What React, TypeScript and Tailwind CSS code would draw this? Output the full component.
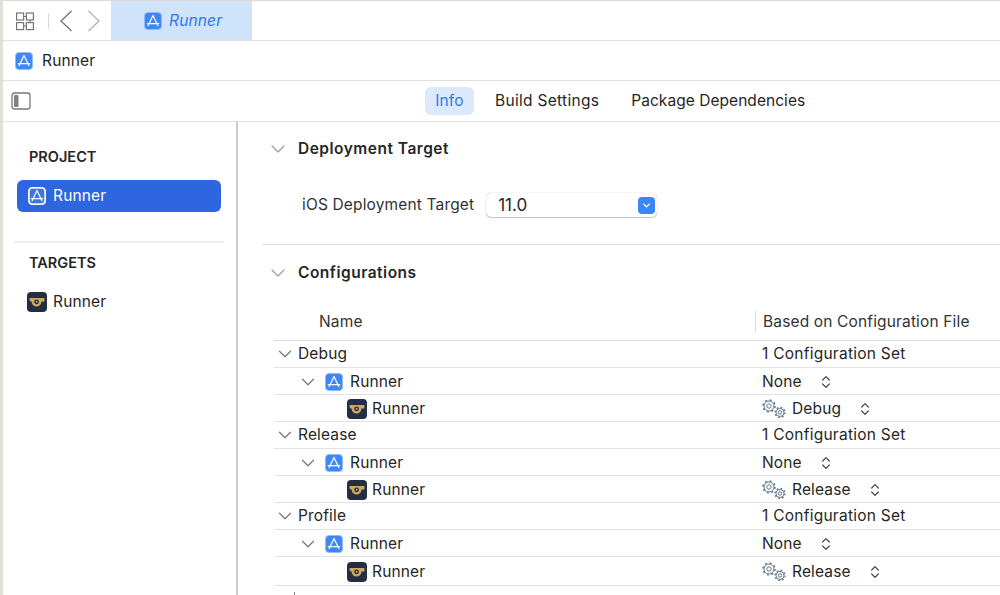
import { ChevronDown, ChevronsUpDown } from 'lucide-react';

const font = { fontFamily: 'Inter, "Liberation Sans", sans-serif' };

// blue project icon
function AppIcon({ size = 18, selected = false }: { size?: number; selected?: boolean }) {
  return (
    <svg width={size} height={size} viewBox="0 0 18 18" className="shrink-0">
      <rect x="0.5" y="0.5" width="17" height="17" rx="3.5" fill={selected ? '#e8effc' : '#3f87f5'} stroke={selected ? '#fff' : '#8fbcfa'} />
      <rect x="1.8" y="1.8" width="14.4" height="14.4" rx="2.4" fill={selected ? '#3f74e6' : '#3f87f5'} />
      <path d="M9 3.6 L13.8 13.6 M9 3.6 L4.2 13.6 M3.2 11.6 H14.8" stroke="#fff" strokeWidth="1.2" strokeLinecap="round" fill="none" />
    </svg>
  );
}

// dark target icon with the gold cannon
function TargetIcon() {
  return (
    <svg width="20" height="20" viewBox="0 0 20 20" className="shrink-0">
      <rect width="20" height="20" rx="4" fill="#232e44" />
      <path d="M2.6 6 L17.4 6 L17.4 9.6 L14.6 9.6 C14.2 12.8 12.2 14.6 9.6 14.6 C6.8 14.6 4.8 12.6 4.6 9.8 L2.6 8.8 Z" fill="#cfa560" />
      <circle cx="9.6" cy="9.8" r="2.4" fill="#232e44" />
      <circle cx="9.6" cy="9.8" r="1" fill="#cfa560" />
    </svg>
  );
}

function Gears() {
  return (
    <svg width="26" height="20" viewBox="0 0 26 20" className="shrink-0">
      <g fill="none" stroke="#64798c">
        <circle cx="8" cy="7" r="5" strokeWidth="1" />
        <circle cx="8" cy="7" r="6" strokeWidth="1.5" strokeDasharray="2 2.7" />
        <circle cx="8" cy="7" r="2.2" strokeWidth="1" />
        <circle cx="19" cy="13.5" r="4" strokeWidth="1" />
        <circle cx="19" cy="13.5" r="5" strokeWidth="1.4" strokeDasharray="1.8 2.1" />
        <circle cx="19" cy="13.5" r="1.7" strokeWidth="1" />
      </g>
    </svg>
  );
}

function NameRow({ children, value, last = false, low = false }: { children: React.ReactNode; value: React.ReactNode; last?: boolean; low?: boolean }) {
  return (
    <div className={(last ? 'h-[29px]' : 'h-[27px]') + (low ? ' pt-[2px]' : '') + ' flex items-center border-b border-[#e3e3e3] text-[15.5px] tracking-[0.15px] text-[#262626]'}>
      <div className="flex w-[488px] shrink-0 items-center">{children}</div>
      {value}
    </div>
  );
}

function GroupRows({ name, file, fileGap, last = false }: { name: string; file: string; fileGap: string; last?: boolean }) {
  return (
    <>
      <NameRow value={<span className="tracking-[0.25px]">1 Configuration Set</span>}>
        <ChevronDown size={22} strokeWidth={1.3} className="mr-[2px] text-[#777]" />
        <span>{name}</span>
      </NameRow>
      <NameRow
        low
        value={
          <span className="flex items-center">
            None
            <ChevronsUpDown size={16} strokeWidth={1.8} className="ml-[16px] text-[#444]" />
          </span>
        }
      >
        <ChevronDown size={22} strokeWidth={1.3} className="ml-[23px] mr-[6px] text-[#777]" />
        <AppIcon />
        <span className="ml-[7px]">Runner</span>
      </NameRow>
      <NameRow
        low
        last={last}
        value={
          <span className="-ml-[1px] flex items-center">
            <Gears />
            <span className="ml-[5px]">{file}</span>
            <ChevronsUpDown size={16} strokeWidth={1.8} className={fileGap + ' text-[#444]'} />
          </span>
        }
      >
        <span className="ml-[73px]"><TargetIcon /></span>
        <span className="ml-[5px]">Runner</span>
      </NameRow>
    </>
  );
}

export default function App() {
  return (
    <div style={font} className="flex h-[595px] w-[1000px] flex-col overflow-hidden border-t border-[#dedbd6] bg-white pl-[3px] shadow-[inset_3px_0_0_#e2dfda]">
      {/* toolbar with the editor tab */}
      <div className="flex h-[40px] shrink-0 items-center border-b border-[#dfdfdf]">
        <svg width="20" height="20" viewBox="0 0 20 20" className="ml-[12px] shrink-0" fill="none" stroke="#777" strokeWidth="1.2">
          <rect x="1.6" y="2" width="7" height="7" />
          <rect x="11.4" y="2" width="7" height="7" />
          <rect x="1.6" y="11.6" width="7" height="7" />
          <rect x="11.4" y="11.6" width="7" height="7" />
          <path d="M8.6 5.5 H11.4 M8.6 15 H11.4 M15 9 V11.6" />
        </svg>
        <div className="ml-[13px] h-[16px] w-px bg-[#d8d8d8]" />
        <svg width="14" height="24" viewBox="0 0 14 24" className="ml-[10px] shrink-0" fill="none" stroke="#777" strokeWidth="1.4">
          <path d="M12.5 2 L2 12 L12.5 22" />
        </svg>
        <svg width="14" height="24" viewBox="0 0 14 24" className="ml-[14px] shrink-0" fill="none" stroke="#b5b5b5" strokeWidth="1.4">
          <path d="M1.5 2 L12 12 L1.5 22" />
        </svg>
        <div className="ml-[10px] flex h-full w-[141px] items-center bg-[#cfe3fb] pl-[33px]">
          <AppIcon />
          <span className="ml-[7px] text-[15.5px] italic tracking-[0.15px] text-[#2f78ee]">Runner</span>
        </div>
      </div>

      {/* breadcrumb */}
      <div className="flex h-[40px] shrink-0 items-center border-b border-[#dfdfdf] pl-[12px] text-[15.5px] tracking-[0.15px] text-[#262626]">
        <AppIcon />
        <span className="ml-[9px]">Runner</span>
      </div>

      {/* editor tabs */}
      <div className="flex h-[41px] shrink-0 items-center border-b border-[#dfdfdf] text-[15.5px] tracking-[0.15px]">
        <svg width="20" height="18" viewBox="0 0 20 18" className="ml-[8px] shrink-0">
          <rect x="1" y="1" width="18" height="16" rx="2.5" fill="none" stroke="#777" strokeWidth="1.3" />
          <rect x="3" y="3" width="4.5" height="12" rx="1" fill="#808080" />
        </svg>
        <div className="ml-[394px] flex h-[28px] w-[49px] items-center justify-center rounded-md bg-[#dce9fb] text-[#2f78ee]">Info</div>
        <span className="ml-[21px] tracking-[0.3px] text-[#262626]">Build Settings</span>
        <span className="ml-[32px] tracking-[0.05px] text-[#262626]">Package Dependencies</span>
      </div>

      <div className="flex min-h-0 flex-1">
        {/* project / targets list */}
        <div className="w-[235px] shrink-0 border-r-2 border-[#cdcdcd] pt-[24px]">
          <div className="pl-[26px] text-[14.5px] font-semibold leading-[22px] text-[#262626]">PROJECT</div>
          <div className="ml-[14px] mt-[12px] flex h-[32px] w-[204px] items-center rounded-md bg-[#2e65e0] pl-[11px] text-[15.5px] tracking-[0.15px] text-white">
            <AppIcon selected />
            <span className="ml-[7px]">Runner</span>
          </div>
          <div className="ml-[11px] mt-[29px] h-[2px] w-[210px] bg-[#eeeeee]" />
          <div className="mt-[9px] pl-[26px] text-[14.5px] font-semibold leading-[22px] text-[#262626]">TARGETS</div>
          <div className="mt-[16px] flex items-center pl-[24px] text-[15.5px] tracking-[0.15px] text-[#262626]">
            <TargetIcon />
            <span className="ml-[6px]">Runner</span>
          </div>
        </div>

        {/* info pane */}
        <div className="min-w-0 flex-1 pl-[24px]">
          <div className="mt-[16px] flex h-[22px] items-center text-[15.5px] font-semibold tracking-[0.5px] text-[#262626]">
            <ChevronDown size={24} strokeWidth={1.3} className="ml-[4px] text-[#a0a0a0]" />
            <span className="ml-[8px]">Deployment Target</span>
          </div>
          <div className="mt-[33px] flex h-[24px] items-center text-[15.5px] tracking-[0.15px] text-[#333]">
            <span className="ml-[40px]">iOS Deployment Target</span>
            <div className="ml-[12px] flex h-[24px] w-[171px] items-center justify-between rounded-[5px] bg-white pl-[12px] pr-[2px] text-[17px] tracking-normal text-[#262626] shadow-[0_0_1px_rgba(0,0,0,0.35),0_1px_1px_rgba(0,0,0,0.2)]">
              <span className="pt-px">11.0</span>
              <span className="flex h-[17px] w-[17px] items-center justify-center rounded-[4px] bg-[#3b85f7]">
                <ChevronDown size={11} strokeWidth={3} className="text-white" />
              </span>
            </div>
          </div>
          <div className="mt-[27px] h-px bg-[#dcdcdc]" />
          <div className="mt-[17px] flex h-[22px] items-center text-[15.5px] font-semibold tracking-[0.5px] text-[#262626]">
            <ChevronDown size={24} strokeWidth={1.3} className="ml-[4px] text-[#a0a0a0]" />
            <span className="ml-[8px]">Configurations</span>
          </div>

          <div className="ml-[12px] mt-[20px]">
            <div className="flex h-[37px] items-center border-b border-[#dcdcdc] text-[15.5px] tracking-[0.15px] text-[#333]">
              <span className="ml-[45px] w-[436px] shrink-0">Name</span>
              <div className="h-[22px] w-px bg-[#dcdcdc]" />
              <span className="ml-[7px] whitespace-nowrap">Based on Configuration File</span>
            </div>
            <GroupRows name="Debug" file="Debug" fileGap="ml-[16px]" />
            <GroupRows name="Release" file="Release" fileGap="ml-[16px]" />
            <GroupRows name="Profile" file="Release" fileGap="ml-[16px]" last />
            <div className="ml-[20px] mt-[6px] h-[4px] w-px bg-[#888]" />
          </div>
        </div>
      </div>
    </div>
  );
}
